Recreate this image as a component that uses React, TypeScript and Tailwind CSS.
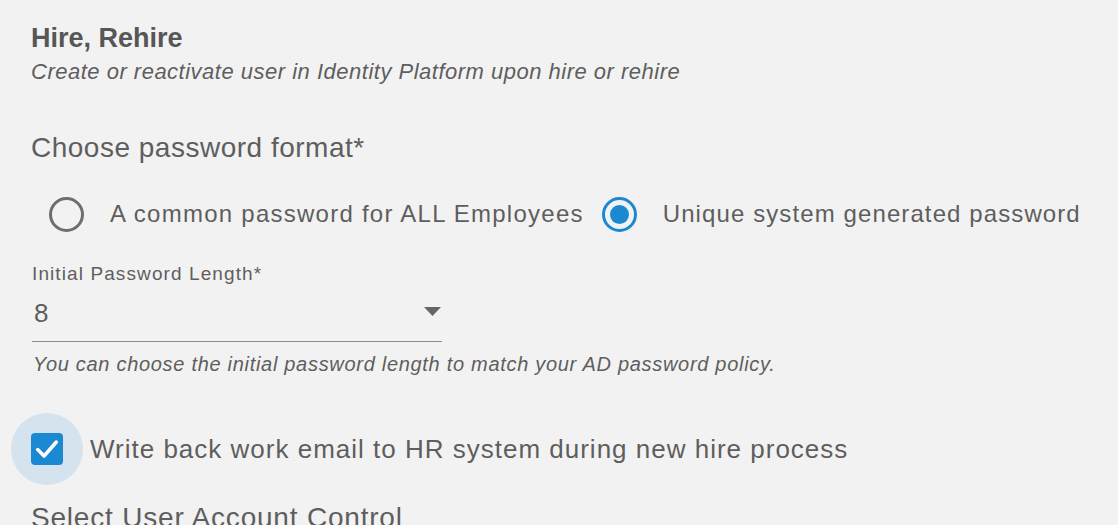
import { useState } from "react";

function Radio({
  checked,
  label,
  labelClass,
  onClick,
}: {
  checked: boolean;
  label: string;
  labelClass: string;
  onClick: () => void;
}) {
  return (
    <label className="flex items-center cursor-pointer" onClick={onClick}>
      <span
        className={`flex items-center justify-center w-[35px] h-[35px] rounded-full border-[3px] ${
          checked ? "border-[#1b89d1]" : "border-[#6e6e6e]"
        }`}
      >
        {checked && <span className="block w-[19px] h-[19px] rounded-full bg-[#1b89d1]" />}
      </span>
      <span className={`ml-[26px] text-[24px] leading-[48px] text-[#5e5e5e] ${labelClass}`}>{label}</span>
    </label>
  );
}

export default function App() {
  const [format, setFormat] = useState<"common" | "unique">("unique");
  const [writeBack, setWriteBack] = useState<boolean>(true);

  return (
    <div
      className="min-h-[525px] w-full bg-[#f2f2f2] pl-[31px] pt-[22px] overflow-hidden text-[#5e5e5e]"
      style={{ fontFamily: '"Liberation Sans", Arial, Helvetica, sans-serif' }}
    >
      <h2 className="text-[27px] leading-[32px] font-bold text-[#565656]">Hire, Rehire</h2>
      <p className="mt-[4px] text-[22px] leading-[28px] italic tracking-[0.5px]">
        Create or reactivate user in Identity Platform upon hire or rehire
      </p>

      <div className="mt-[44px] text-[28px] leading-[36px] tracking-[0.5px]">Choose password format*</div>

      <div className="mt-[24px] flex items-center h-[48px] pl-[18px]">
        <Radio
          checked={format === "common"}
          label="A common password for ALL Employees"
          labelClass="tracking-[1.25px]"
          onClick={() => setFormat("common")}
        />
        <div className="ml-[18px]">
          <Radio
            checked={format === "unique"}
            label="Unique system generated password"
            labelClass="tracking-[1.1px]"
            onClick={() => setFormat("unique")}
          />
        </div>
      </div>

      {/* password length select */}
      <div className="mt-[24px] w-[411px] pl-[1px]">
        <div className="text-[19px] leading-[24px] tracking-[1.1px]">Initial Password Length*</div>
        <div className="mt-[5px] flex items-center justify-between pb-[6px] border-b border-[#8c8c8c]">
          <span className="text-[26px] leading-[44px] pl-[2px]">8</span>
          <svg width="17" height="9" viewBox="0 0 17 9" className="mr-[1px] mb-[4px]">
            <polygon points="0,0 17,0 8.5,9" fill="#666" />
          </svg>
        </div>
      </div>
      <p className="mt-[9px] text-[20px] leading-[26px] italic tracking-[0.7px] pl-[2px]">
        You can choose the initial password length to match your AD password policy.
      </p>

      <div className="mt-[36px] flex items-center -ml-[20px]">
        <button
          className="flex items-center justify-center w-[72px] h-[72px] rounded-full bg-[#d5e3ef]"
          onClick={() => setWriteBack(!writeBack)}
        >
          <span
            className={`flex items-center justify-center w-[32px] h-[32px] rounded-[4px] ${
              writeBack ? "bg-[#1b89d1]" : "border-2 border-[#6e6e6e]"
            }`}
          >
            {writeBack && (
              <svg width="28" height="28" viewBox="0 0 24 24">
                <polyline points="4,12.5 9.5,18 20,6" fill="none" stroke="#fff" strokeWidth="3" strokeLinecap="round" strokeLinejoin="round" />
              </svg>
            )}
          </span>
        </button>
        <span className="ml-[7px] text-[26px] leading-[36px] tracking-[1px]">
          Write back work email to HR system during new hire process
        </span>
      </div>

      <div className="mt-[15px] text-[28px] leading-[36px] tracking-[0.8px]">Select User Account Control</div>
    </div>
  );
}
